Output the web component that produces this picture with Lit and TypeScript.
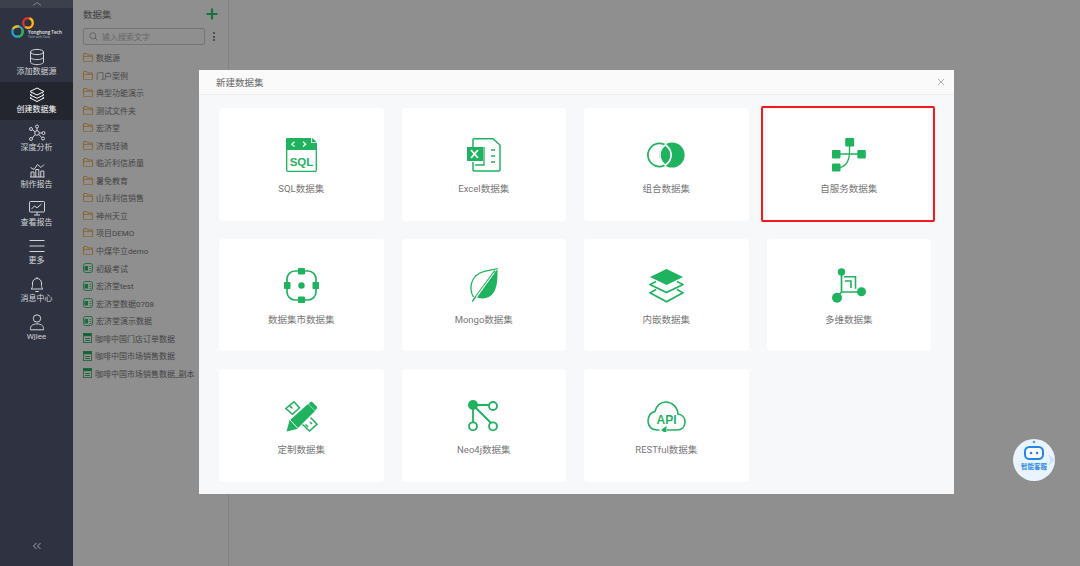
import { LitElement, html, css, svg } from "lit";
import { customElement } from "lit/decorators.js";

const G = "#1fb25f";

const navIcons = [
  svg`<ellipse cx="9" cy="4" rx="6.5" ry="2.6"/><path d="M2.5 4v10c0 1.500 3 2.600 6.500 2.600s6.500-1.100 6.500-2.600V4M2.500 9c0 1.500 3 2.600 6.500 2.600s6.500-1.100 6.500-2.600"/>`,
  svg`<path d="M9 2l7 3.500-7 3.500-7-3.500z"/><path d="M3.500 7.800L2 8.800 9 12.300l7-3.500-1.500-1M3.500 11L2 12l7 3.500 7-3.500-1.500-1"/>`,
  svg`<circle cx="9" cy="9" r="2.300"/><circle cx="9" cy="2.500" r="1.500"/><circle cx="3" cy="5" r="1.500"/><circle cx="3" cy="15" r="1.500"/><circle cx="15" cy="14.500" r="1.500"/><circle cx="15.500" cy="9" r="1.500"/><path d="M9 4v2.700M4.300 5.700L7 7.700M4.300 14L7.200 10.500M13.800 13.500L10.800 10.500M14 9h-2.700"/>`,
  svg`<path d="M2 16h14.500M3 16v-5h3v5M7.800 16V8.500h3V16M12.800 16v-6h3v6M2.500 6.500L6 8.500 9.500 3.500 13 6.500l3-3"/>`,
  svg`<rect x="1.500" y="2.500" width="15" height="10.500" rx=".8"/><path d="M3.500 10l3-3 2.500 1.800L13.500 5M6 16h6M9 13v3"/>`,
  svg`<path d="M1.500 3.500h15M1.500 9h15M1.500 14.500h15"/>`,
  svg`<path d="M3 14c1.200-1 1.500-2 1.500-3.500V8a4.500 4.500 0 0 1 9 0v2.500c0 1.500.3 2.500 1.500 3.500zM7.300 16.500h3.400M9 2v1.300"/>`,
  svg`<circle cx="9" cy="5.500" r="3.700"/><path d="M2.500 16.800v-1.300c0-2.800 2.500-4.600 6.500-4.600s6.500 1.800 6.500 4.600v1.300z"/>`,
];
const navLabels = ["添加数据源", "创建数据集", "深度分析", "制作报告", "查看报告", "更多", "消息中心", "Wjlee"];

const folders = ["数据源", "门户案例", "典型功能演示", "测试文件夹", "宏济堂", "济南轻骑", "临沂利信质量", "暑免教育", "山东利信销售", "神州天立", "项目DEMO", "中煤华立demo"];
const books = ["初级考试", "宏济堂test", "宏济堂数据0708", "宏济堂演示数据"];
const sheets = ["咖啡中国门店订单数据", "咖啡中国市场销售数据", "咖啡中国市场销售数据_副本"];

const cards = [
  { label: "SQL数据集", w: 31, h: 34, icon: svg`
    <path fill="${G}" d="M0 1a1 1 0 0 1 1-1h24v5h6v7H0z"/><path fill="${G}" d="M26 0l5 4.200h-5z"/>
    <path fill="none" stroke="${G}" stroke-width="1.300" d="M.7 11v21.300a1 1 0 0 0 1 1h27.600a1 1 0 0 0 1-1V5"/>
    <path fill="none" stroke="#fff" stroke-width="1.300" d="M8.500 3.800L5.800 6.200l2.700 2.400M17 3.800l2.700 2.400L17 8.600"/>
    <text x="15.500" y="27.500" text-anchor="middle" font-family="Liberation Sans, sans-serif" font-weight="700" font-size="11.500" fill="${G}">SQL</text>` },
  { label: "Excel数据集", w: 34, h: 34, icon: svg`
    <path fill="none" stroke="${G}" stroke-width="1.500" d="M6 9V1.700a1 1 0 0 1 1-1h19l7 6.300v25a1 1 0 0 1-1 1H7a1 1 0 0 1-1-1V24"/>
    <path fill="none" stroke="${G}" stroke-width="1.300" d="M17 9v18H8"/>
    <path fill="${G}" d="M0 9h16v14H0z"/>
    <path stroke="#fff" stroke-width="1.800" d="M4 12l7 8M11 12l-7 8"/>
    <path stroke="${G}" stroke-width="1.500" d="M24 12h4M24 18h4M24 24h4"/>` },
  { label: "组合数据集", w: 38, h: 26, icon: svg`
    <defs>
      <clipPath id="cR"><circle cx="25" cy="13" r="12.600"/></clipPath>
      <clipPath id="cL"><circle cx="12.500" cy="13" r="12.500"/></clipPath>
    </defs>
    <circle cx="25" cy="13" r="12.600" fill="${G}"/>
    <circle cx="12.500" cy="13" r="11.600" fill="none" stroke="${G}" stroke-width="1.700"/>
    <circle cx="12.500" cy="13" r="11.600" fill="none" stroke="#fff" stroke-width="1.700" clip-path="url(#cR)"/>
    <circle cx="25" cy="13" r="12" fill="none" stroke="#fff" stroke-width="1.500" clip-path="url(#cL)"/>` },
  { label: "自服务数据集", w: 34, h: 34, icon: svg`
    <path fill="none" stroke="${G}" stroke-width="1.300" d="M4 16h28M17.500 4v9c0 9-3 17-13.500 17"/>
    <rect x="13.200" y="0" width="9" height="8.500" rx="1" fill="${G}"/>
    <rect x="0" y="12" width="8.500" height="8.500" rx="1" fill="${G}"/>
    <rect x="25.300" y="12" width="8.500" height="8.500" rx="1" fill="${G}"/>
    <rect x="0" y="25.500" width="8.500" height="8" rx="1" fill="${G}"/>` },
  { label: "数据集市数据集", w: 35, h: 35, icon: svg`
    <rect x="3" y="3" width="29" height="29" rx="8" fill="none" stroke="${G}" stroke-width="1.700"/>
    <rect x="14" y="0" width="7" height="6.500" rx=".8" fill="${G}"/><rect x="14" y="28.500" width="7" height="6.500" rx=".8" fill="${G}"/>
    <rect x="0" y="14" width="6.500" height="7" rx=".8" fill="${G}"/><rect x="28.500" y="14" width="6.500" height="7" rx=".8" fill="${G}"/>
    <circle cx="17.500" cy="17.500" r="3.200" fill="${G}"/>` },
  { label: "Mongo数据集", w: 28, h: 35, icon: svg`
    <path fill="none" stroke="${G}" stroke-width="1.300" d="M3.500 29C-1 22 0 10 10 5 16 2 22 2.500 27.500.5"/>
    <path fill="${G}" d="M27.500.8C27.500 10 27.500 18 24 24c-4 6.500-11 7.500-17 5.500z"/>
    <path fill="none" stroke="${G}" stroke-width="1.400" d="M25 2.500L2.200 33.500"/>
    <path fill="none" stroke="#fff" stroke-width="1" d="M24 5L6.500 28.500"/>` },
  { label: "内嵌数据集", w: 35, h: 34, icon: svg`
    <path fill="${G}" d="M17.500 0l16.500 8-16.500 8L1 8z"/>
    <path fill="none" stroke="${G}" stroke-width="1.700" d="M7 12.500L1 15.600l16.500 8 16.500-8-6-3.100M7 20.500L1 23.800l16.500 9 16.500-9-6-3.300"/>` },
  { label: "多维数据集", w: 34, h: 35, icon: svg`
    <path fill="none" stroke="${G}" stroke-width="1.700" d="M9.500 4v20L4 30M9.500 24H29"/>
    <path fill="none" stroke="${G}" stroke-width="1.600" d="M12 8.700h11.500V20.800M13 13h6v7"/>
    <circle cx="9.500" cy="4" r="3.700" fill="${G}"/><circle cx="29.500" cy="23.700" r="4.500" fill="${G}"/><circle cx="5" cy="29.700" r="5" fill="${G}"/>` },
  { label: "定制数据集", w: 34, h: 31, icon: svg`
    <path fill="${G}" d="M2.500 30.500l3-11L24 3l7 7-18 18z"/>
    <path fill="${G}" d="M26 1.500a2 2 0 0 1 2.800 0l3.700 3.700a2 2 0 0 1 0 2.800L31 9.500 24.500 3z"/>
    <path fill="none" stroke="#fff" stroke-width="1" d="M6 19l7.500 8"/>
    <path fill="none" stroke="${G}" stroke-width="1.500" d="M10 .8l5.500 6-7 6.500L1.800 7.500z M6 5l2.500 2.500"/>
    <path fill="none" stroke="${G}" stroke-width="1.500" d="M26.500 16.500l6.500 6.800-7.500 6.700-7-6.500 M24 26l-2.500-2.500M28 23l-2-2"/>` },
  { label: "Neo4j数据集", w: 31, h: 32, icon: svg`
    <path fill="none" stroke="${G}" stroke-width="1.800" d="M5 5h20M5 5v18M5 5l20 20"/>
    <circle cx="5" cy="5" r="5" fill="${G}"/>
    <circle cx="25" cy="6" r="4" fill="#fff" stroke="${G}" stroke-width="1.800"/>
    <circle cx="5" cy="26.300" r="4" fill="#fff" stroke="${G}" stroke-width="1.800"/>
    <circle cx="25" cy="26.300" r="4" fill="#fff" stroke="${G}" stroke-width="1.800"/>` },
  { label: "RESTful数据集", w: 39, h: 31, icon: svg`
    <path fill="none" stroke="${G}" stroke-width="1.600" d="M20 29h10c5 0 8-3.500 8-8 0-4.500-3-7.500-7-8-.5-7-6-12-12-12-5.500 0-10 4-11 9.500C3.500 11 1 15.500 1 20c0 5 3.500 9 8.500 9h3"/>
    <path fill="${G}" d="M19.500 25v8l-5.500-4z"/>
    <text x="19.500" y="22.500" text-anchor="middle" font-family="Liberation Sans, sans-serif" font-weight="700" font-size="12" fill="${G}">API</text>` },
];

@customElement("app-root")
export class AppRoot extends LitElement {
  static styles = css`
    :host { display: block; width: 100%; height: 100vh; overflow: hidden; position: relative;
      font-family: Roboto, "Noto Sans CJK SC", sans-serif; background: #fff; }
    .app { display: flex; height: 100%; }

    .side { width: 73px; flex: none; background: #2f3341; color: #d4d5d9; display: flex; flex-direction: column;
      align-items: stretch; position: relative; z-index: 3; }
    .side-top { height: 8px; background: #3c404c; display: flex; justify-content: center; }
    .side-top svg { display: block; }
    .logo { height: 36px; display: flex; }
    .logo-rings { width: 29px; height: 29px; margin-left: 11px; margin-top: 7px; flex: none; margin-right: -12px; }
    .logo-text { display: flex; flex-direction: column; margin-top: 21px; font-family: "Open Sans", sans-serif; line-height: 6px; }
    .logo-text b { font-size: 4.600px; color: #e8e8ea; font-weight: 600; white-space: nowrap; }
    .logo-text span { font-size: 3.200px; color: #b9bbc0; line-height: 5px; white-space: nowrap; }
    .nav { height: 37.800px; display: flex; flex-direction: column; align-items: center; padding-top: 4px; box-sizing: border-box; }
    .nav svg { width: 18px; height: 18px; fill: none; stroke: #d4d5d9; stroke-width: 1; display: block; flex: none; }
    .nav span { font-size: 8px; line-height: 12px; white-space: nowrap; }
    .nav.on { background: #23262f; color: #fff; }
    .nav.on svg { stroke: #fff; }
    .spacer { flex: 1; }
    .collapse { height: 26px; display: flex; justify-content: center; align-items: flex-start; padding-top: 2px; box-sizing: border-box; }
    .collapse svg { display: block; }

    .panel { width: 156px; flex: none; box-sizing: border-box; border-right: 1px solid #e8e8e8; padding-left: 10px; }
    .panel-head { height: 18px; margin-top: 6px; display: flex; align-items: center; justify-content: space-between; padding-right: 10px; }
    .panel-head span { font-size: 9.500px; color: #777; line-height: 18px; }
    .panel-head svg { display: block; margin-top: -2px; }
    .search-row { display: flex; align-items: center; margin-top: 4px; height: 17px; }
    .search { width: 122px; height: 17px; box-sizing: border-box; border: 1px solid #d0d0d0; border-radius: 2px; display: flex; align-items: center; padding-left: 5px; gap: 4px; font-size: 8px; color: #bbb; }
    .search svg { display: block; flex: none; }
    .kebab { margin-left: 8px; display: flex; flex-direction: column; gap: 1.500px; }
    .kebab i { width: 2px; height: 2px; background: #666; display: block; border-radius: 50%; }
    .tree { margin-top: 3.700px; }
    .row { height: 17.550px; display: flex; align-items: center; gap: 3px; font-size: 8px; color: #7a7a7a; white-space: nowrap; }
    .row svg { flex: none; display: block; }
    .main { flex: 1; }

    .scrim { position: absolute; inset: 0 0 0 73px; background: rgba(0, 0, 0, .44); z-index: 1; }
    .modal { position: absolute; left: 199px; top: 70px; width: 755px; height: 424px; background: #f7f8fa; z-index: 2; }
    .modal-head { height: 24px; background: #fafafa; border-bottom: 1px solid #eceef0; display: flex; align-items: center; justify-content: space-between; padding: 0 9px 0 17px; }
    .modal-head span { font-size: 9.500px; color: #666; }
    .modal-head svg { display: block; }
    .grid { display: grid; grid-template-columns: repeat(4, 164.500px); grid-auto-rows: 112.500px; gap: 18px; padding: 13px 0 0 20px; }
    .card { background: #fff; border-radius: 4px; display: flex; flex-direction: column; align-items: center; position: relative; }
    .icon { height: 36px; margin-top: 29px; display: flex; align-items: center; justify-content: center; }
    .icon svg { display: block; }
    .label { font-size: 9.500px; line-height: 14px; color: #777; margin-top: 9px; white-space: nowrap; }
    .mark { position: absolute; left: -6px; top: -2.500px; width: 174px; height: 116px; box-sizing: border-box; border: 2px solid #f5191c; border-radius: 2px; }

    .robot { position: absolute; left: 1013px; top: 439px; width: 42px; height: 42px; border-radius: 50%; background: #e9f4fe; z-index: 3; display: flex; flex-direction: column; align-items: center; }
    .robot svg { display: block; margin-top: 1px; }
    .robot span { font-size: 6.500px; line-height: 8px; color: #2f8be6; font-weight: 700; white-space: nowrap; margin-top: 1px; }
    .robot .chev { position: absolute; right: 0; top: 15px; margin: 0; }
  `;

  render() {
    return html`
      <div class="app">
        <aside class="side">
          <div class="side-top">
            <svg width="10" height="8" viewBox="0 0 10 8"><path d="M1 5.500L5 2.500 9 5.500" fill="none" stroke="#7d808a" stroke-width="1"/></svg>
          </div>
          <div class="logo">
            <svg class="logo-rings" viewBox="0 0 29 29" fill="none" stroke-width="2.200">
              <circle cx="17" cy="8" r="4.800" stroke="#e8342f"/>
              <circle cx="17" cy="8" r="4.800" stroke="#f4bd16" pathLength="100" stroke-dasharray="55 45" stroke-dashoffset="20"/>
              <circle cx="6.500" cy="16.500" r="5.200" stroke="#22a6de"/>
              <circle cx="6.500" cy="16.500" r="5.200" stroke="#f4bd16" pathLength="100" stroke-dasharray="22 78" stroke-dashoffset="42"/>
              <circle cx="6.500" cy="16.500" r="5.200" stroke="#35b44a" pathLength="100" stroke-dasharray="30 70" stroke-dashoffset="8"/>
            </svg>
            <div class="logo-text"><b>Yonghong Tech</b><span>Tech with Data</span></div>
          </div>
          ${navLabels.map((l, i) => html`<div class="nav ${i === 1 ? "on" : ""}"><svg viewBox="0 0 18 18">${navIcons[i]}</svg><span>${l}</span></div>`)}
          <div class="spacer"></div>
          <div class="collapse">
            <svg width="10" height="8" viewBox="0 0 10 8"><path d="M4.500 1L1.500 4l3 3M8.500 1l-3 3 3 3" fill="none" stroke="#a3a5ad" stroke-width="1"/></svg>
          </div>
        </aside>
        <section class="panel">
          <div class="panel-head">
            <span>数据集</span>
            <svg width="12" height="12" viewBox="0 0 12 12"><path d="M6 .5v11M.5 6h11" stroke="#30c872" stroke-width="2.200"/></svg>
          </div>
          <div class="search-row">
            <div class="search">
              <svg width="9" height="9" viewBox="0 0 9 9"><circle cx="3.800" cy="3.800" r="3" fill="none" stroke="#aaa" stroke-width=".9"/><path d="M6 6l2.500 2.500" stroke="#aaa" stroke-width=".9"/></svg>
              输入搜索文字
            </div>
            <div class="kebab"><i></i><i></i><i></i></div>
          </div>
          <div class="tree">
            ${folders.map((f) => html`<div class="row"><svg width="10" height="9" viewBox="0 0 10 9"><path d="M.5 7.800V1a.5.5 0 0 1 .5-.5h2.800l1 1.400H9a.5.5 0 0 1 .5.500v6a.4.4 0 0 1-.4.400H1a.5.5 0 0 1-.5-.5zM.5 3.300h9" fill="none" stroke="#f5ad45" stroke-width=".9"/></svg>${f}</div>`)}
            ${books.map((f) => html`<div class="row"><svg width="10" height="10" viewBox="0 0 10 10"><rect x=".5" y=".5" width="9" height="9" rx="2" fill="none" stroke="#2fbf6c" stroke-width=".9"/><path d="M1.500 3h3.500v4.500H1.500z" fill="#2fbf6c"/><path d="M6.300 3.500h2M6.300 5.500h2M6.300 7.500h2" stroke="#2fbf6c" stroke-width=".7"/></svg>${f}</div>`)}
            ${sheets.map((f) => html`<div class="row"><svg width="9" height="10" viewBox="0 0 9 10"><rect x=".4" y=".4" width="8.200" height="9.200" fill="none" stroke="#2aaf63" stroke-width=".8"/><path d="M.4.400h8.200v2.800H.4z" fill="#2aaf63"/><path d="M2 5.500h5M2 7.500h5" stroke="#2aaf63" stroke-width=".9"/></svg>${f}</div>`)}
          </div>
        </section>
        <div class="main"></div>
      </div>
      <div class="scrim"></div>
      <div class="modal">
        <div class="modal-head">
          <span>新建数据集</span>
          <svg width="8" height="8" viewBox="0 0 8 8"><path d="M1 1l6 6M7 1L1 7" stroke="#9a9a9a" stroke-width=".8"/></svg>
        </div>
        <div class="grid">
          ${cards.map((c, i) => html`<div class="card">
            <div class="icon"><svg width="${c.w}" height="${c.h}" viewBox="0 0 ${c.w} ${c.h}">${c.icon}</svg></div>
            <div class="label">${c.label}</div>
            ${i === 3 ? html`<div class="mark"></div>` : ""}
          </div>`)}
        </div>
      </div>
      <div class="robot">
        <svg width="26" height="22" viewBox="0 0 26 22">
          <circle cx="13" cy="2" r="1.300" fill="#4a9df0"/>
          <rect x="4" y="7" width="18" height="12" rx="4.500" fill="#fff" stroke="#1f86ea" stroke-width="2"/>
          <circle cx="10" cy="13" r="1.300" fill="#1f86ea"/><circle cx="16" cy="13" r="1.300" fill="#1f86ea"/>
        </svg>
        <span>智能客服</span>
        <svg class="chev" width="7" height="12" viewBox="0 0 7 12"><path d="M0 0l7 6-7 6 2.500-6z" fill="#cfe0f2"/></svg>
      </div>
    `;
  }
}
